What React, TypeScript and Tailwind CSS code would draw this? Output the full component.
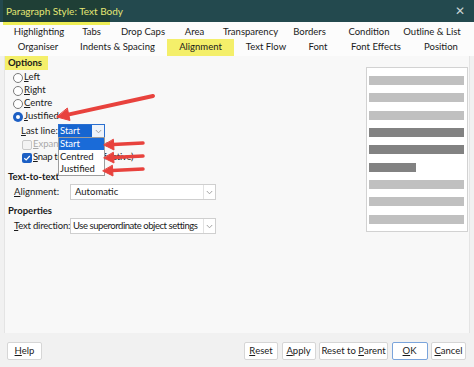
import React from "react";

const Chevron = () => (
  <svg width="7" height="5" viewBox="0 0 7 5" className="block">
    <path d="M0.8 1 L3.5 3.8 L6.2 1" fill="none" stroke="#9a9a9a" strokeWidth="0.9" />
  </svg>
);

const Mn = ({ c }: { c: string }) => <span className="underline underline-offset-[1px]">{c}</span>;

const Radio = ({ checked, children }: { checked?: boolean; children: React.ReactNode }) => (
  <div className="flex h-[13px] items-center pl-[8px]">
    {checked ? (
      <span className="flex h-[10px] w-[10px] items-center justify-center rounded-full bg-[#1c5fc4]">
        <span className="h-[4px] w-[4px] rounded-full bg-white" />
      </span>
    ) : (
      <span className="h-[10px] w-[10px] rounded-full border border-[#7a7a7a] bg-white" />
    )}
    <span className="ml-[1px]">{children}</span>
  </div>
);

const Select = ({ value, w, tight }: { value: string; w: string; tight?: boolean }) => (
  <div className={`flex h-[16px] items-stretch border border-[#cfcfcf] bg-white ${w}`}>
    <span
      className={`flex-1 overflow-hidden leading-[14px] ${tight ? "pl-[2px] tracking-[-0.45px]" : "pl-[4px]"}`}
    >
      {value}
    </span>
    <span className="flex w-[12px] items-center justify-center border-l border-[#e2e2e2]">
      <Chevron />
    </span>
  </div>
);

const Btn = ({ children, w, ok }: { children: React.ReactNode; w: string; ok?: boolean }) => (
  <div
    className={`flex h-[18px] items-center justify-center rounded-[2px] border bg-white ${w} ${
      ok ? "border-[#7aa4db]" : "border-[#d6d6d6]"
    }`}
  >
    {children}
  </div>
);

const row1 = [
  ["Highlighting", "w-[52px]"],
  ["Tabs", "w-[53px]"],
  ["Drop Caps", "w-[50px]"],
  ["Area", "w-[53px]"],
  ["Transparency", "w-[59px]"],
  ["Borders", "w-[59px]"],
  ["Condition", "w-[60px]"],
  ["Outline & List", "w-[66px]"],
];

const row2 = [
  ["Organiser", "w-[60px]"],
  ["Indents & Spacing", "w-[99px]"],
  ["Alignment", "w-[67px]"],
  ["Text Flow", "w-[64px]"],
  ["Font", "w-[40px]"],
  ["Font Effects", "w-[76px]"],
  ["Position", "w-[54px]"],
];

const bars = ["l", "l", "l", "d", "d", "s", "l", "l", "l"];

export default function App() {
  return (
    <div className="relative h-[367px] w-[474px] overflow-hidden whitespace-nowrap bg-[#f1f1f1] font-['Lato',sans-serif] text-[9.5px] text-[#1a1a1a]">
      {/* title bar */}
      <div className="flex h-[22px] items-center justify-between bg-[#23494e]">
        <div className="ml-[3px] flex h-[22px] w-[107px] items-center bg-[#1f3f36] pl-[3px] text-[10px] text-[#e4e774]">
          Paragraph Style: Text Body
        </div>
        <span className="mr-[9px] text-[12px] leading-none text-[#c9d3d4]">✕</span>
      </div>

      {/* tabs */}
      <div className="relative h-[34px] bg-[#fcfcfc]">
        <div className="absolute left-[3px] top-0 h-[3px] w-[107px] bg-[#eeee55]" />
        <div className="flex h-[17px] items-center pl-[13px] pt-[4px]">
          {row1.map(([t, w]) => (
            <span key={t} className={`text-center ${w}`}>
              {t}
            </span>
          ))}
        </div>
        <div className="flex h-[17px] items-stretch pl-[8px]">
          {row2.map(([t, w]) => (
            <span
              key={t}
              className={`flex items-center justify-center ${w} ${t === "Alignment" ? "bg-[#f4ef6a]" : ""}`}
            >
              {t}
            </span>
          ))}
        </div>
      </div>

      {/* panel */}
      <div className="mx-[4px] flex h-[277px] border-x border-[#e4e4e4] bg-[#f8f8f8]">
        <div className="flex-1">
          <div className="flex h-[14px] w-[43px] items-center bg-[#f4ef6a] pl-[3px] font-bold">Options</div>
          <div className="mt-[1px]">
            <Radio>
              <Mn c="L" />
              eft
            </Radio>
            <Radio>
              <Mn c="R" />
              ight
            </Radio>
            <Radio>
              <Mn c="C" />
              entre
            </Radio>
            <Radio checked>
              <Mn c="J" />
              ustified
            </Radio>
          </div>
          <div className="mt-[1px] flex h-[14px] items-center pl-[16px]">
            <span className="w-[37px]">
              <Mn c="L" />
              ast line:
            </span>
            <div className="relative">
              <div className="flex h-[14px] w-[47px] border border-[#2a6fd0] bg-white">
                <span className="flex-1 bg-[#1765d0] pl-[1px] leading-[12px] text-white">Start</span>
                <span className="flex w-[12px] items-center justify-center bg-[#eef3fa]">
                  <Chevron />
                </span>
              </div>
              <div className="absolute left-0 top-[13px] z-10 w-[47px] border border-[#9d9d9d] bg-white">
                <div className="h-[12px] bg-[#1a6bd8] pl-[1px] leading-[12px] text-white">Start</div>
                <div className="h-[13px] pl-[1px] leading-[13px]">Centred</div>
                <div className="h-[12px] pl-[1px] leading-[12px]">Justified</div>
              </div>
            </div>
          </div>
          <div className="flex h-[13px] items-center pl-[17px] text-[#a8a8a8]">
            <span className="mr-[1px] h-[10px] w-[10px] rounded-[2px] border border-[#c9c9c9] bg-[#f3f3f3]" />
            <span>
              <Mn c="E" />
              xpand single word
            </span>
          </div>
          <div className="flex h-[13px] items-center pl-[17px]">
            <span className="mr-[1px] flex h-[10px] w-[10px] items-center justify-center rounded-[2px] bg-[#1c5fc4]">
              <svg width="8" height="8" viewBox="0 0 8 8">
                <path d="M1.3 4.2 L3.2 6 L6.8 2" fill="none" stroke="white" strokeWidth="1.2" />
              </svg>
            </span>
            <span className="tracking-[-0.3px]">
              <Mn c="S" />
              nap to text grid (if active)
            </span>
          </div>

          <div className="mt-[6px] flex h-[14px] items-center pl-[3px] font-bold">Text-to-text</div>
          <div className="flex h-[16px] items-center pl-[9px]">
            <span className="w-[56px]">
              <Mn c="A" />
              lignment:
            </span>
            <Select value="Automatic" w="w-[146px]" />
          </div>
          <div className="mt-[4px] flex h-[14px] items-center pl-[3px] font-bold">Properties</div>
          <div className="flex h-[16px] items-center pl-[9px]">
            <span className="w-[56px] tracking-[-0.2px]">
              <Mn c="T" />
              ext direction:
            </span>
            <Select value="Use superordinate object settings" w="w-[146px]" tight />
          </div>
        </div>

        <div className="pr-[1px] pt-[11px]">
          <div className="flex w-[102px] flex-col gap-[8.35px] border border-[#d2d2d2] bg-white pb-[7px] pl-[2px] pr-[3px] pt-[8px]">
            {bars.map((b, i) => (
              <div
                key={i}
                className={`h-[9px] ${
                  b === "l" ? "w-full bg-[#c0c0c0]" : b === "d" ? "w-full bg-[#828282]" : "w-[47px] bg-[#828282]"
                }`}
              />
            ))}
          </div>
        </div>
      </div>

      {/* buttons */}
      <div className="flex items-center pl-[7px] pr-[8px] pt-[9px]">
        <Btn w="w-[35px]">
          <Mn c="H" />
          elp
        </Btn>
        <div className="flex-1" />
        <div className="flex gap-[3.5px]">
          <Btn w="w-[34px]">
            <Mn c="R" />
            eset
          </Btn>
          <Btn w="w-[34px]">
            <Mn c="A" />
            pply
          </Btn>
          <Btn w="w-[69px]">
            Reset to&nbsp;<Mn c="P" />
            arent
          </Btn>
          <Btn w="w-[36px]" ok>
            <Mn c="O" />K
          </Btn>
          <Btn w="w-[35px]">
            <Mn c="C" />
            ancel
          </Btn>
        </div>
      </div>

      {/* red annotation arrows */}
      <svg className="pointer-events-none absolute left-0 top-0 z-20" width="474" height="367">
        <g fill="#e8423d" stroke="#e8423d" strokeLinecap="round">
          <line x1="153" y1="96" x2="68" y2="114.6" strokeWidth="4" />
          <polygon points="57,117 70,120.5 67.4,108.4" strokeWidth="1" strokeLinejoin="round" />
          <line x1="143" y1="143" x2="113" y2="144.6" strokeWidth="3.5" />
          <polygon points="104,145 114,150 113.4,139.6" strokeWidth="1" strokeLinejoin="round" />
          <line x1="143" y1="156" x2="113" y2="157.6" strokeWidth="3.5" />
          <polygon points="104,158 114,163 113.4,152.6" strokeWidth="1" strokeLinejoin="round" />
          <line x1="143" y1="169" x2="112" y2="170.6" strokeWidth="3.5" />
          <polygon points="103,171 113,176 112.4,165.6" strokeWidth="1" strokeLinejoin="round" />
        </g>
      </svg>
    </div>
  );
}
